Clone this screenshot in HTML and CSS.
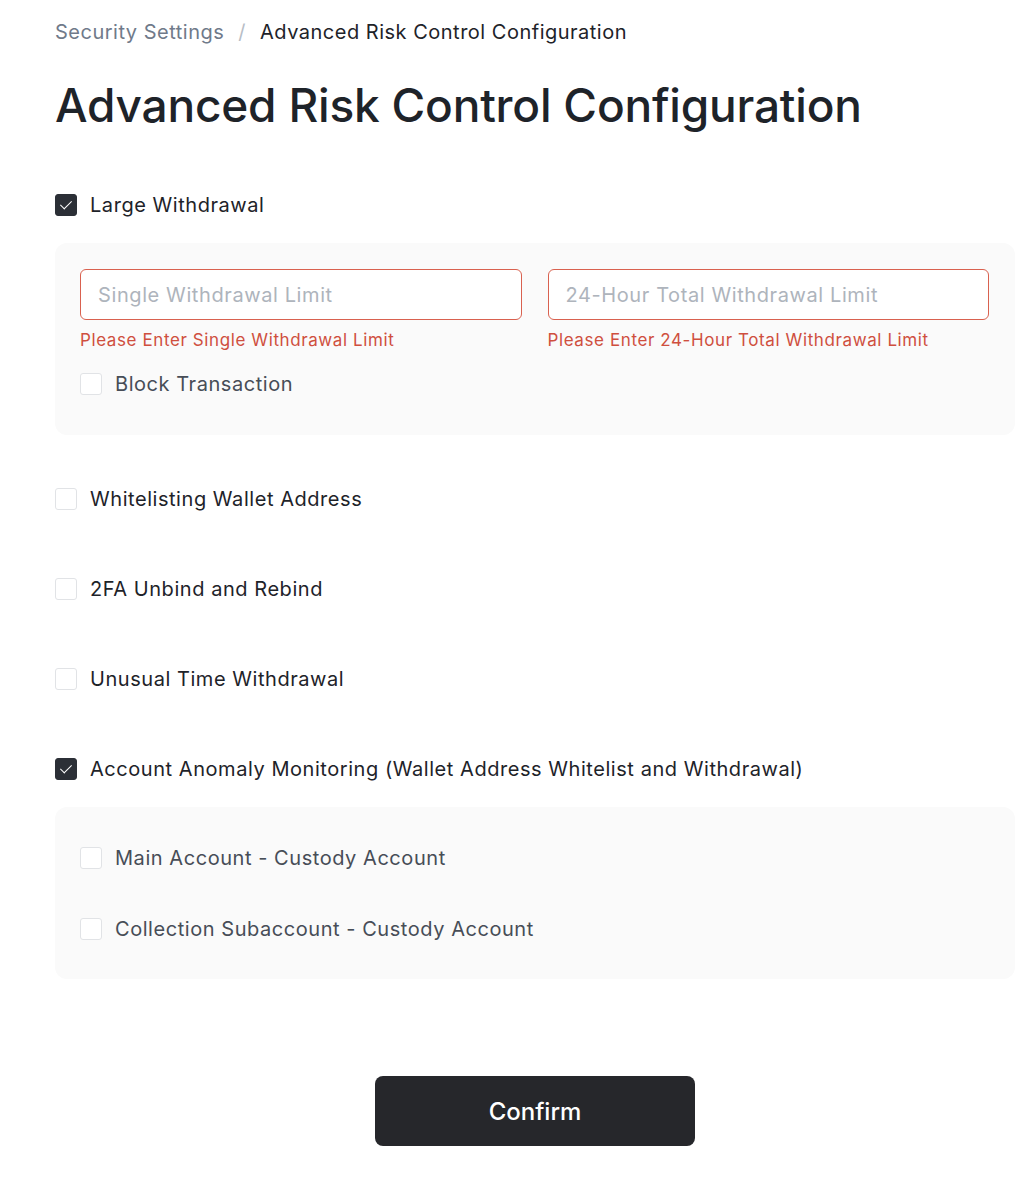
FILE: index.html
```html
<!DOCTYPE html>
<html>
  <head>
    <link rel="stylesheet" href="styles.css">
  </head>
  <body>
    <div class="page">
      <div class="breadcrumb">
        <span class="crumb-parent">Security Settings</span>
        <span class="crumb-sep">/</span>
        <span class="crumb-current">Advanced Risk Control Configuration</span>
      </div>
      <h1 class="title">Advanced Risk Control Configuration</h1>

      <div class="section">
        <label class="option">
          <span class="box checked"></span>Large Withdrawal
        </label>
        <div class="panel panel-limits">
          <div class="fields">
            <div class="field">
              <input class="input error" type="text" placeholder="Single Withdrawal Limit">
              <div class="error-text">Please Enter Single Withdrawal Limit</div>
            </div>
            <div class="field">
              <input class="input error" type="text" placeholder="24-Hour Total Withdrawal Limit">
              <div class="error-text">Please Enter 24-Hour Total Withdrawal Limit</div>
            </div>
          </div>
          <label class="option sub">
            <span class="box"></span>Block Transaction
          </label>
        </div>
      </div>

      <div class="section">
        <label class="option"><span class="box"></span>Whitelisting Wallet Address</label>
      </div>
      <div class="section">
        <label class="option"><span class="box"></span>2FA Unbind and Rebind</label>
      </div>
      <div class="section">
        <label class="option"><span class="box"></span>Unusual Time Withdrawal</label>
      </div>

      <div class="section">
        <label class="option">
          <span class="box checked"></span>Account Anomaly Monitoring (Wallet Address Whitelist and Withdrawal)
        </label>
        <div class="panel panel-accounts">
          <label class="option sub"><span class="box"></span>Main Account - Custody Account</label>
          <label class="option sub"><span class="box"></span>Collection Subaccount - Custody Account</label>
        </div>
      </div>

      <div class="actions">
        <button class="confirm">Confirm</button>
      </div>
    </div>
  </body>
</html>
```

FILE: styles.css
```css
body {
    margin: 0;
    background: #fff;
    font-family: Inter, "Noto Sans", sans-serif;
    color: #1e2329;
}
.page {
    width: 960px;
    padding: 18px 0 0 55px;
}
.breadcrumb {
    font-size: 20px;
    line-height: 28px;
    letter-spacing: 0.5px;
    display: flex;
    gap: 14px;
}
.crumb-parent { color: #707a8a; }
.crumb-sep { color: #b7bdc6; }
.crumb-current { color: #1e2329; }
.title {
    margin: 31px 0 0;
    font-size: 46px;
    line-height: 56px;
    font-weight: 500;
    letter-spacing: -0.2px;
    color: #1e2329;
}
.section {
    margin-top: 50px;
}
.title + .section {
    margin-top: 58px;
}
.option {
    display: flex;
    align-items: center;
    gap: 13px;
    font-size: 20px;
    line-height: 28px;
    letter-spacing: 0.55px;
    padding-bottom: 12px;
    color: #1e2329;
}
.box {
    width: 20px;
    height: 20px;
    border: 1px solid #e1e3e6;
    border-radius: 3px;
    background: #fff;
    flex: none;
    position: relative;
}
.box.checked {
    background: #2b2f36;
    border-color: #2b2f36;
}
.box.checked::after {
    content: "";
    position: absolute;
    left: 7px;
    top: 3px;
    width: 5px;
    height: 10px;
    border: solid #fff;
    border-width: 0 1.5px 1.5px 0;
    transform: rotate(45deg);
}
.panel {
    background: #fafafa;
    border-radius: 12px;
    margin-top: 12px;
}
.panel-limits {
    padding: 26px 26px 25px 25px;
}
.panel-accounts {
    padding: 37px 25px 24px;
}
.panel .option {
    color: #474d57;
}
.panel-accounts .option + .option {
    margin-top: 31px;
}
.fields {
    display: grid;
    grid-template-columns: 1fr 1fr;
    gap: 26px;
}
.input {
    box-sizing: border-box;
    width: 100%;
    height: 51px;
    border: 1.5px solid #d9614f;
    border-radius: 6px;
    padding: 0 17px;
    font-family: inherit;
    font-size: 20px;
    letter-spacing: 0.6px;
    color: #1e2329;
    background: #fff;
    outline: none;
}
.input::placeholder {
    color: #aeb4bc;
}
.error-text {
    margin-top: 9px;
    font-size: 17px;
    line-height: 22px;
    letter-spacing: 0.6px;
    color: #cf4f3e;
}
.panel-limits .option {
    margin-top: 19px;
}
.actions {
    display: flex;
    justify-content: center;
    margin-top: 97px;
}
.confirm {
    width: 320px;
    height: 70px;
    border: none;
    border-radius: 8px;
    background: #26272b;
    color: #fff;
    font-family: inherit;
    font-size: 24px;
    font-weight: 500;
}
```
